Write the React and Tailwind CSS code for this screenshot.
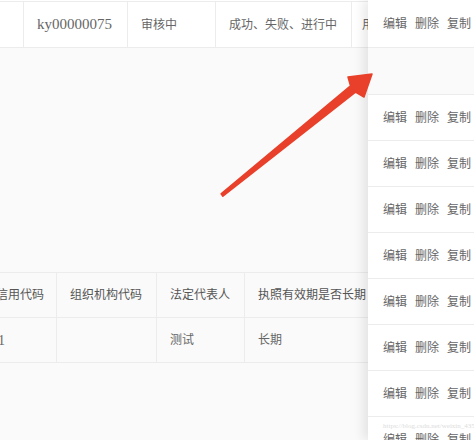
import React from "react";

const font = { fontFamily: '"Liberation Serif", "Noto Sans CJK SC", serif' };

function Actions() {
  return (
    <div className="flex items-center gap-[8px] text-[12px] text-[#666] whitespace-nowrap">
      <span>编辑</span>
      <span>删除</span>
      <span>复制</span>
    </div>
  );
}

export default function App() {
  const rows = [0, 1, 2, 3, 4, 5, 6, 7];

  return (
    <div
      className="relative w-[474px] h-[440px] overflow-hidden bg-[#fafafa] text-[#666]"
      style={font}
    >
      {/* top data row */}
      <div className="pt-px bg-white">
        <div className="flex h-[47px] border-y border-[#ececec] bg-white text-[12px] whitespace-nowrap">
          <div className="w-[24px] shrink-0 border-r border-[#ececec]" />
          <div className="w-[104px] shrink-0 border-r border-[#ececec] flex items-center pl-[13px] text-[15px]">
            ky00000075
          </div>
          <div className="w-[88px] shrink-0 border-r border-[#ececec] flex items-center pl-[13px]">
            审核中
          </div>
          <div className="w-[136px] shrink-0 border-r border-[#ececec] flex items-center pl-[13px]">
            成功、失败、进行中
          </div>
          <div className="w-[20px] shrink-0 overflow-hidden flex items-center pl-[10px]">用户</div>
        </div>
      </div>

      {/* second table */}
      <div className="mt-[224px] -ml-[20px] text-[12px] whitespace-nowrap">
        <div className="flex h-[46px] border-y border-[#ececec] text-[#555]">
          <div className="w-[77px] shrink-0 border-r border-[#ececec] flex items-center pl-[16px]">
            信用代码
          </div>
          <div className="w-[100px] shrink-0 border-r border-[#ececec] flex items-center pl-[13px]">
            组织机构代码
          </div>
          <div className="w-[88px] shrink-0 border-r border-[#ececec] flex items-center pl-[13px]">
            法定代表人
          </div>
          <div className="flex-1 flex items-center pl-[13px]">执照有效期是否长期</div>
        </div>
        <div className="flex h-[45px] border-b border-[#ececec]">
          <div className="w-[77px] shrink-0 border-r border-[#ececec] flex items-center pl-[18px] text-[14px]">
            1
          </div>
          <div className="w-[100px] shrink-0 border-r border-[#ececec]" />
          <div className="w-[88px] shrink-0 border-r border-[#ececec] flex items-center pl-[13px]">
            测试
          </div>
          <div className="flex-1 flex items-center pl-[13px]">长期</div>
        </div>
      </div>

      {/* fixed action column */}
      <div className="absolute top-0 right-0 bottom-0 w-[106px] bg-white shadow-[-5px_0_10px_rgba(0,0,0,0.09)] flex flex-col">
        <div className="h-[48px] shrink-0 border-b border-[#ececec] flex items-center pl-[15px]">
          <Actions />
        </div>
        <div className="h-[47px] shrink-0 border-b border-[#ececec] bg-[#fafafa]" />
        {rows.map((r) => (
          <div
            key={r}
            className="h-[46px] shrink-0 border-b border-[#ececec] flex items-center pl-[15px]"
          >
            <Actions />
          </div>
        ))}
      </div>

      {/* watermark */}
      <div className="absolute left-[383px] top-[421px] text-[7px] text-[#dcdcdc] whitespace-nowrap">
        https://blog.csdn.net/weixin_435
      </div>

      {/* red arrow annotation */}
      <svg
        className="absolute left-0 top-0 pointer-events-none"
        width="474"
        height="440"
        viewBox="0 0 474 440"
      >
        <polygon
          points="221.1,193.8 350.5,85.9 348,77 372,74 364,97 355.5,92.1 222.9,196.2"
          fill="#e8402a"
          stroke="#e8402a"
          strokeWidth="1.5"
          strokeLinejoin="round"
        />
      </svg>
    </div>
  );
}
